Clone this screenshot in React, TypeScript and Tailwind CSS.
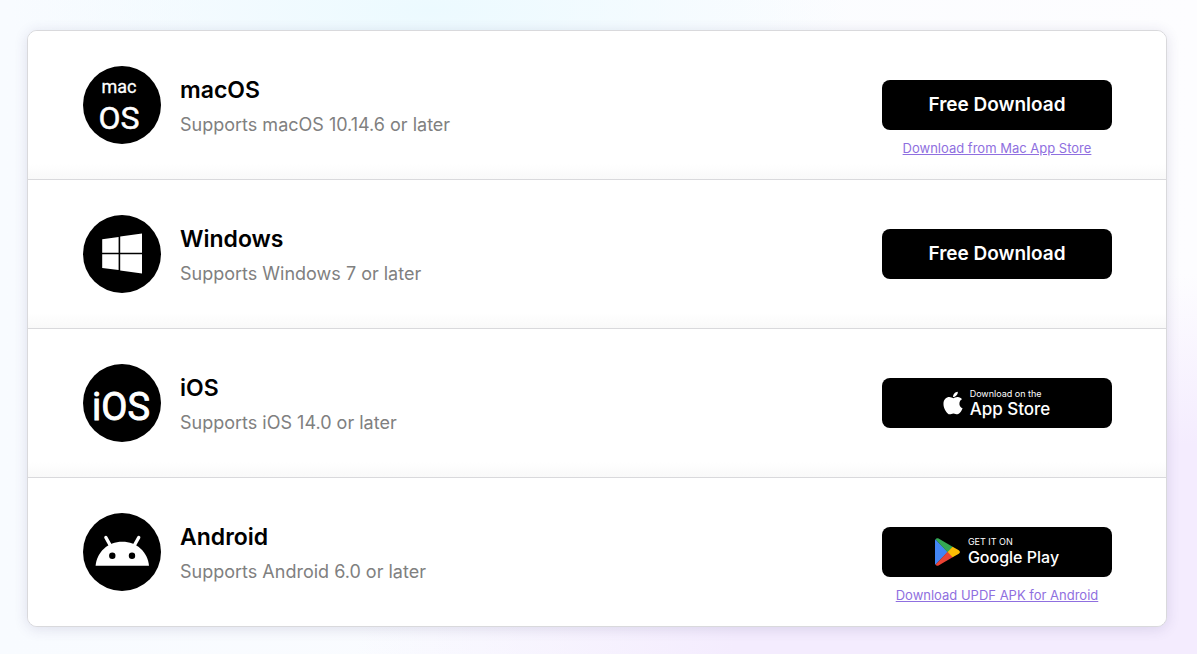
import type { ReactNode } from 'react'
import { FaApple } from 'react-icons/fa'

function MacIcon() {
  return (
    <svg viewBox="0 0 78 78" className="size-[78px] shrink-0 font-[Roboto,sans-serif]" fill="#fff">
      <circle cx="39" cy="39" r="39" fill="#000" />
      <text x="36" y="27" fontSize="18" textAnchor="middle" stroke="#fff" strokeWidth=".3">mac</text>
      <text x="36" y="63" fontSize="32" textAnchor="middle" stroke="#fff" strokeWidth=".5">OS</text>
    </svg>
  )
}

function WindowsIcon() {
  return (
    <svg viewBox="0 0 78 78" className="size-[78px] shrink-0" fill="#fff">
      <circle cx="39" cy="39" r="39" fill="#000" />
      <path d="M19.2 24.2 35.6 21.9V37.7H19.2zM37.2 21.6 59 18.6V37.7H37.2zM19.2 39.2H35.6V55.1L19.2 52.9zM37.2 39.2H59V58.4L37.2 55.4z" />
    </svg>
  )
}

function IosIcon() {
  return (
    <svg viewBox="0 0 78 78" className="size-[78px] shrink-0 font-[Roboto,sans-serif]" fill="#fff">
      <circle cx="39" cy="39" r="39" fill="#000" />
      <text x="38" y="56" fontSize="38" textAnchor="middle" stroke="#fff" strokeWidth=".9">iOS</text>
    </svg>
  )
}

function AndroidIcon() {
  return (
    <svg viewBox="0 0 78 78" className="size-[78px] shrink-0" fill="#fff">
      <circle cx="39" cy="39" r="39" fill="#000" />
      <path d="M22.8 24.4 28.4 34.4M55.8 24.4 50.2 34.4" stroke="#fff" strokeWidth="3.2" strokeLinecap="round" />
      <path d="M12.6 52.8C13.8 39.2 24.8 28.8 39.3 28.8S64.8 39.2 66 52.8z" />
      <circle cx="29.3" cy="42.7" r="3.2" fill="#000" />
      <circle cx="49" cy="42.7" r="3.2" fill="#000" />
    </svg>
  )
}

function PlayIcon() {
  return (
    <svg viewBox="0 0 25 28" className="h-7 w-[25px] shrink-0">
      <path d="M.5 1.2C.2 1.6 0 2.1 0 2.8V25.2C0 25.9.2 26.4.5 26.8L12.8 14z" fill="#4285f4" />
      <path d="M.5 1.2C1.2.2 2.4 0 3.6.6L18 9 12.8 14.4z" fill="#34a853" />
      <path d="M.5 26.8C1.2 27.8 2.4 28 3.6 27.4L18 19 12.8 13.6z" fill="#ea4335" />
      <path d="M17.6 8.8 23.4 12.1C25.4 13.2 25.4 14.8 23.4 15.9L17.6 19.2 12.6 14z" fill="#fbbc04" />
    </svg>
  )
}

function FreeDownload() {
  return <span className="text-[19px] font-semibold">Free Download</span>
}

function AppStoreBadge() {
  return (
    <>
      <FaApple className="mr-1 size-[26px]" />
      <span className="flex flex-col pr-1">
        <span className="text-[9px] leading-3">Download on the</span>
        <span className="text-[17px] leading-[18px] font-medium">App Store</span>
      </span>
    </>
  )
}

function GooglePlayBadge() {
  return (
    <>
      <PlayIcon />
      <span className="ml-2 flex flex-col">
        <span className="text-[9px] leading-[10px]">GET IT ON</span>
        <span className="text-base leading-5 font-medium">Google Play</span>
      </span>
    </>
  )
}

type Platform = {
  name: string
  support: string
  icon: ReactNode
  button: ReactNode
  link?: string
}

const platforms: Platform[] = [
  {
    name: 'macOS',
    support: 'Supports macOS 10.14.6 or later',
    icon: <MacIcon />,
    button: <FreeDownload />,
    link: 'Download from Mac App Store',
  },
  {
    name: 'Windows',
    support: 'Supports Windows 7 or later',
    icon: <WindowsIcon />,
    button: <FreeDownload />,
  },
  {
    name: 'iOS',
    support: 'Supports iOS 14.0 or later',
    icon: <IosIcon />,
    button: <AppStoreBadge />,
  },
  {
    name: 'Android',
    support: 'Supports Android 6.0 or later',
    icon: <AndroidIcon />,
    button: <GooglePlayBadge />,
    link: 'Download UPDF APK for Android',
  },
]

export default function App() {
  return (
    <main className="min-h-screen bg-[radial-gradient(ellipse_420px_130px_at_430px_10px,#ecfaff,transparent),radial-gradient(ellipse_840px_380px_at_100%_100%,#f4ecfe_55%,transparent),linear-gradient(to_right,#f8fbff,#fdfdff)] pt-[30px] pr-[30px] pb-[27px] pl-[27px] font-[Inter,sans-serif]">
      <ul className="divide-y divide-[#d9d9dc] overflow-hidden rounded-[10px] border border-[#d9d9dc] bg-white shadow-[0_2px_14px_rgba(60,50,110,0.14)]">
        {platforms.map((p) => (
          <li
            key={p.name}
            className="flex min-h-[149px] items-start bg-linear-to-t from-[#f9f9f9] to-white to-10% pt-[35px] pr-[54px] pl-[55px] last:min-h-[148px] last:from-white"
          >
            {p.icon}
            <div className="ml-[19px] pt-2">
              <h2 className="text-[23px] leading-8 font-semibold text-black">{p.name}</h2>
              <p className="mt-[3px] text-lg leading-8 text-[#808080]">{p.support}</p>
            </div>
            <div className="mt-[14px] ml-auto flex w-[230px] shrink-0 flex-col items-center">
              <a
                href="#"
                className="flex h-[50px] w-full items-center justify-center rounded-lg bg-black text-white"
              >
                {p.button}
              </a>
              {p.link && (
                <a href="#" className="mt-2 text-[13px] leading-5 text-[#8f6fe0] underline">
                  {p.link}
                </a>
              )}
            </div>
          </li>
        ))}
      </ul>
    </main>
  )
}
